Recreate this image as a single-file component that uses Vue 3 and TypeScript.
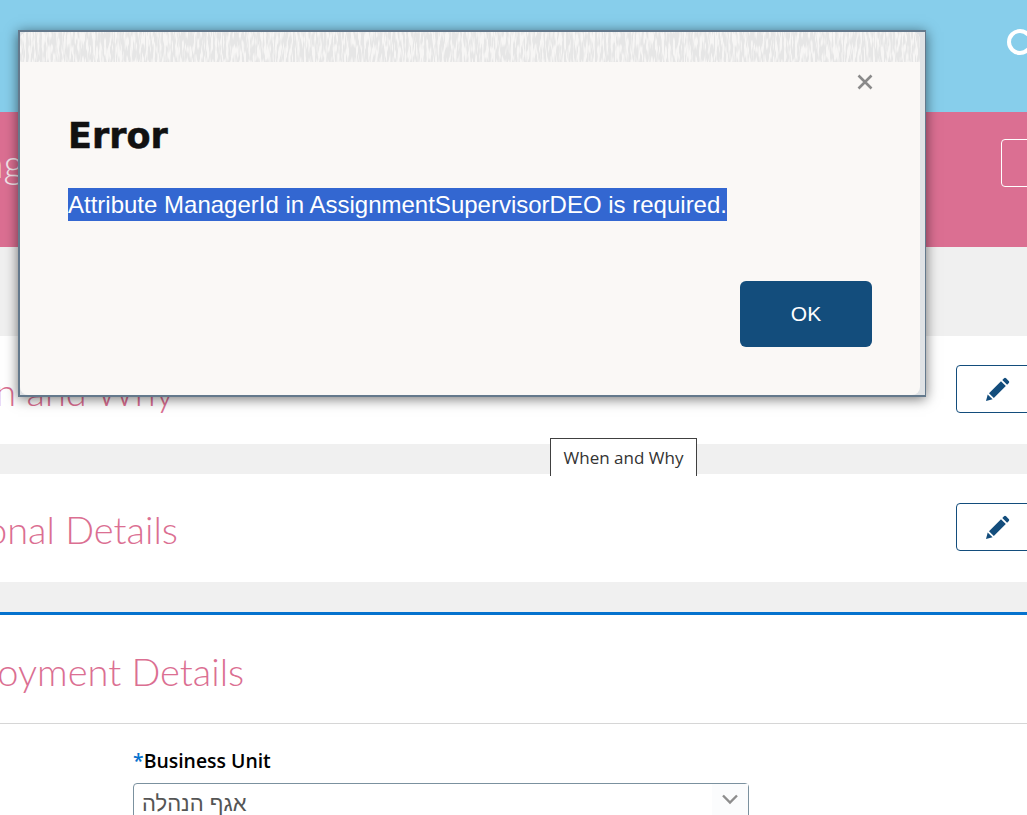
<template>
  <div class="screen">
    <div class="page">
      <header class="top-bar">
        <span class="top-bar__ring" />
      </header>

      <section class="banner">
        <h1 class="banner__title">Managing</h1>
        <button class="banner__action" type="button" aria-label="Continue" />
      </section>

      <div class="gap gap--tall" />

      <template v-for="step in steps" :key="step">
        <section class="step">
          <h2 class="step__title">{{ step }}</h2>
          <button class="step__edit" type="button" :aria-label="'Edit ' + step">
            <svg viewBox="0 0 24 24" width="24" height="24">
              <path d="M0 24l1.7-6.6 4.9 4.9z" />
              <path d="M3 16.2L15 4.2l4.8 4.8-12 12z" />
              <path d="M16.3 2.9l1.5-1.5c.8-.8 1.6-.8 2.3-.1l2.6 2.6c.7.7.7 1.5-.1 2.3l-1.5 1.5z" />
            </svg>
          </button>
        </section>
        <div class="gap" />
      </template>

      <section class="details">
        <h2 class="details__title">Employment Details</h2>
        <div class="details__form">
          <label class="field__label"><span class="field__star">*</span>Business Unit</label>
          <div class="field__select">
            <span dir="rtl">אגף הנהלה</span>
            <span class="field__arrow">
              <svg viewBox="0 0 18 12" width="18" height="12">
                <path d="M2 2.5l7 7 7-7" />
              </svg>
            </span>
          </div>
        </div>
      </section>
    </div>

    <div class="tooltip">When and Why</div>

    <div class="dialog" role="dialog">
      <div class="dialog__panel">
        <div class="dialog__texture">
          <svg width="100%" height="30">
            <filter
              id="streaks"
              x="0"
              y="0"
              width="100%"
              height="100%"
              color-interpolation-filters="sRGB"
            >
              <feTurbulence type="fractalNoise" baseFrequency="0.45 0.07" numOctaves="2" seed="4" />
              <feColorMatrix
                type="matrix"
                values="0 0 0 0 0.9  0 0 0 0 0.9  0 0 0 0 0.9  5 0 0 0 -1.9"
              />
            </filter>
            <rect width="100%" height="30" fill="#f7f6f5" />
            <rect width="100%" height="30" filter="url(#streaks)" />
          </svg>
        </div>
        <button class="dialog__close" type="button" aria-label="Close">
          <svg viewBox="0 0 16 16" width="16" height="16">
            <path d="M1.5 1.5l13 13M14.5 1.5l-13 13" />
          </svg>
        </button>
        <h3 class="dialog__title">Error</h3>
        <p class="dialog__message">
          <span>Attribute ManagerId in AssignmentSupervisorDEO is required.</span>
        </p>
        <div class="dialog__actions">
          <button class="dialog__ok" type="button">OK</button>
        </div>
      </div>
    </div>
  </div>
</template>

<script setup lang="ts">
const steps: string[] = ['When and Why', 'Personal Details']
</script>

<style>
html,
body {
  margin: 0;
  overflow: hidden;
  background: #fff;
}
</style>

<style scoped>
.screen {
  position: relative;
  width: 1027px;
  height: 815px;
  overflow: hidden;
  font-family: 'Open Sans', 'Liberation Sans', sans-serif;
}

.page {
  width: 1200px;
  margin-left: -100px;
}

.top-bar {
  height: 112px;
  background: #87ceeb;
  display: flex;
  justify-content: flex-end;
  align-items: flex-start;
  padding: 29px 60px 0 0;
  box-sizing: border-box;
}

.top-bar__ring {
  width: 26px;
  height: 26px;
  margin-right: 7px;
  box-sizing: border-box;
  border: 4px solid #fff;
  border-radius: 50%;
}

.banner {
  height: 135px;
  background: #db6f92;
  display: flex;
  justify-content: space-between;
  align-items: flex-start;
  padding-top: 27px;
  box-sizing: border-box;
}

.banner__title {
  margin: 0;
  width: 124px;
  display: flex;
  justify-content: flex-end;
  white-space: nowrap;
  font-family: Lato, 'Open Sans', sans-serif;
  font-size: 40px;
  line-height: 48px;
  font-weight: 300;
  color: #f3e6ea;
}

.banner__action {
  width: 99px;
  height: 48px;
  background: transparent;
  border: 1px solid #fff;
  border-radius: 4px;
}

.gap {
  height: 30px;
  background: #f0f0f0;
}

.gap--tall {
  height: 89px;
}

.step {
  height: 108px;
  background: #fff;
  display: flex;
  justify-content: space-between;
  align-items: flex-start;
  padding: 29px 60px 0 16px;
  box-sizing: border-box;
}

.step__title,
.details__title {
  margin: 0;
  font-family: Lato, 'Open Sans', sans-serif;
  font-size: 38px;
  line-height: 48px;
  font-weight: 300;
  color: #db6f92;
}

.step__title {
  margin-top: 2px;
}

.step__edit {
  width: 84px;
  height: 48px;
  padding: 0;
  display: flex;
  align-items: center;
  justify-content: center;
  background: #fff;
  border: 1px solid #134d7c;
  border-radius: 4px;
}

.step__edit svg {
  fill: #134d7c;
}

.details {
  border-top: 3px solid #0572ce;
  background: #fff;
}

.details__title {
  padding: 32px 0 28px 16px;
  border-bottom: 1px solid #d6d6d6;
}

.details__form {
  margin-left: 233px;
  width: 616px;
  padding-top: 24px;
}

.field__label {
  display: block;
  font-size: 19.4px;
  font-weight: 600;
  color: #000;
  line-height: 26px;
}

.field__star {
  color: #0572ce;
}

.field__select {
  margin-top: 9px;
  height: 40px;
  box-sizing: border-box;
  border: 1px solid #7b919f;
  border-radius: 4px;
  background: #fff;
  display: flex;
  justify-content: space-between;
  padding-left: 8px;
  font-size: 22px;
  color: #555;
  line-height: 40px;
  font-family: 'Liberation Sans', sans-serif;
}

.field__arrow {
  width: 36px;
  background: #fbfcfd;
  display: flex;
  justify-content: center;
  padding-top: 9px;
  box-sizing: border-box;
}

.field__arrow svg {
  fill: none;
  stroke: #8d8d8d;
  stroke-width: 2.4;
}

.tooltip {
  position: absolute;
  left: 550px;
  top: 438px;
  width: 147px;
  height: 38px;
  box-sizing: border-box;
  border: 1px solid #404040;
  border-bottom: 0;
  background: #fff;
  color: #333;
  font-size: 17px;
  line-height: 38px;
  text-align: center;
}

.dialog {
  position: absolute;
  left: 18px;
  top: 30px;
  width: 908px;
  height: 367px;
  box-sizing: border-box;
  border: 1px solid #64798c;
  border-width: 2px 1px 2px 2px;
  background: #dfe2e5;
  box-shadow: 0 2px 12px rgba(0, 0, 0, 0.55);
  padding-right: 5px;
}

.dialog__panel {
  position: relative;
  height: 100%;
  background: #faf8f6;
  border-radius: 8px;
  overflow: hidden;
  font-family: 'Liberation Sans', sans-serif;
}

.dialog__texture {
  height: 30px;
}

.dialog__texture svg {
  display: block;
}

.dialog__close {
  position: absolute;
  right: 47px;
  top: 42px;
  padding: 0;
  width: 16px;
  height: 16px;
  background: none;
  border: 0;
}

.dialog__close svg {
  fill: none;
  stroke: #8a8a8a;
  stroke-width: 2.6;
  display: block;
}

.dialog__title {
  margin: 54px 0 0 48px;
  font-family: 'DejaVu Sans', sans-serif;
  font-size: 35px;
  line-height: 40px;
  font-weight: 700;
  color: #111;
  -webkit-text-stroke: 0.5px #111;
}

.dialog__message {
  margin: 32px 0 0 48px;
  font-size: 24px;
  line-height: 33px;
  color: #fff;
}

.dialog__message span {
  display: inline-block;
  background: #3367d1;
}

.dialog__actions {
  display: flex;
  justify-content: flex-end;
  padding: 60px 48px 0 0;
}

.dialog__ok {
  width: 132px;
  height: 66px;
  background: #134d7c;
  border: 0;
  border-radius: 6px;
  color: #fff;
  font-family: 'Liberation Sans', sans-serif;
  font-size: 21px;
}
</style>
